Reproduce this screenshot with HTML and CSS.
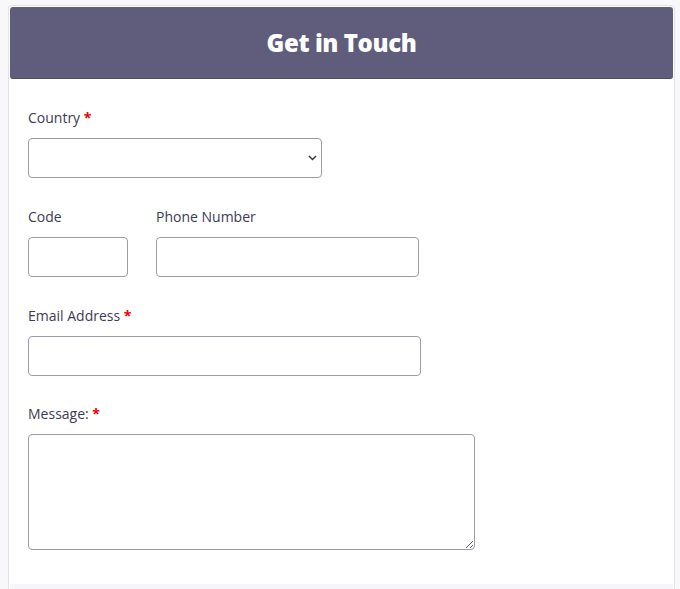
FILE: index.html
```html
<!DOCTYPE html>
<html lang="en">
<head>
<meta charset="utf-8">
<title>Get in Touch</title>
<link rel="stylesheet" href="styles.css">
</head>
<body>
<div class="card">
  <div class="card-header">
    <h1 class="title">Get in Touch</h1>
  </div>
  <form class="form">
    <div class="group">
      <label class="label">Country <span class="req">*</span></label>
      <div class="select-wrap">
        <select class="select"><option></option></select>
        <svg class="chev" width="9" height="6" viewBox="0 0 9 6"><path d="M1 1 L4.5 4.5 L8 1" fill="none" stroke="#333" stroke-width="1.4"/></svg>
      </div>
    </div>
    <div class="group row">
      <div class="col">
        <label class="label">Code</label>
        <input class="input code" type="text">
      </div>
      <div class="col">
        <label class="label">Phone Number</label>
        <input class="input phone" type="text">
      </div>
    </div>
    <div class="group tight">
      <label class="label">Email Address <span class="req">*</span></label>
      <input class="input email" type="text">
    </div>
    <div class="group last">
      <label class="label">Message: <span class="req">*</span></label>
      <textarea class="textarea"></textarea>
    </div>
  </form>
  <div class="card-footer"></div>
</div>
</body>
</html>
```
FILE: styles.css
```css
html, body {
  margin: 0;
  padding: 0;
  background: #f8f8fb;
  font-family: "Open Sans", "Noto Sans", sans-serif;
}
body {
  padding: 5px 5px 0 8px;
}
.card {
  background: #ffffff;
  border: 1px solid #e1e1e6;
  border-radius: 4px;
  padding: 1px 1px 0 1px;
}
.card-header {
  background: #5f5d7b;
  border-radius: 3px;
  border-bottom: 1px solid #4d4b6a;
  height: 71px;
  display: flex;
  align-items: center;
  justify-content: center;
}
.title {
  margin: 0;
  color: #ffffff;
  font-size: 24px;
  font-weight: 800;
  letter-spacing: -0.4px;
}
.form {
  padding: 29px 18px 34px 18px;
}
.group {
  display: flex;
  flex-direction: column;
  margin-bottom: 29px;
}
.group.tight { margin-bottom: 28px; }
.group.last { margin-bottom: 0; }
.row {
  flex-direction: row;
  gap: 28px;
}
.col {
  display: flex;
  flex-direction: column;
}
.label {
  font-size: 14px;
  line-height: 20px;
  color: #3d3b52;
  margin-bottom: 10px;
}
.req {
  color: #ee0000;
  font-weight: 700;
}
.select-wrap {
  position: relative;
  width: 294px;
}
.select {
  appearance: none;
  -webkit-appearance: none;
  width: 294px;
  height: 40px;
  box-sizing: border-box;
  border: 1px solid #9c9aab;
  border-radius: 4px;
  background: #fff;
  margin: 0;
}
.chev {
  position: absolute;
  right: 5px;
  top: 17px;
}
.input {
  box-sizing: border-box;
  height: 40px;
  border: 1px solid #9c9aab;
  border-radius: 4px;
  background: #fff;
  margin: 0;
  padding: 0 8px;
}
.code { width: 100px; }
.phone { width: 263px; }
.email { width: 393px; }
.textarea {
  box-sizing: border-box;
  width: 447px;
  height: 116px;
  border: 1px solid #9c9aab;
  border-radius: 4px;
  margin: 0;
  resize: both;
}
.card-footer {
  height: 12px;
  background: #f6f6f8;
}
```
